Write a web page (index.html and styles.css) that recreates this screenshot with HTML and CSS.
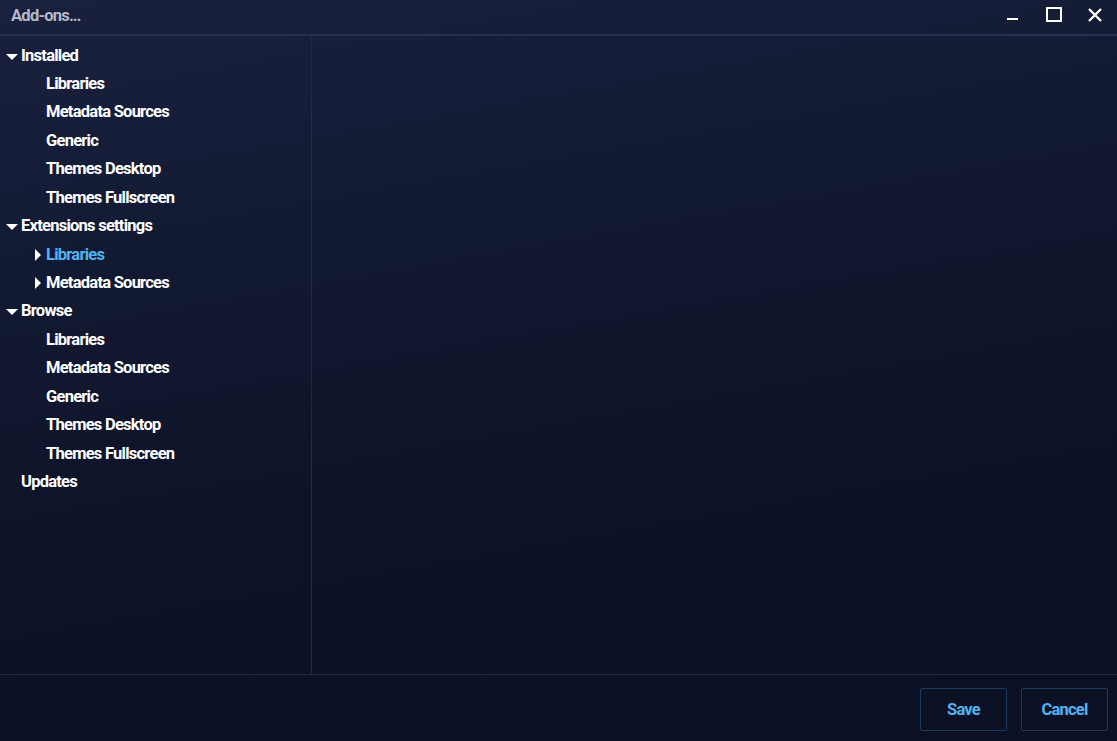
FILE: index.html
```html
<!DOCTYPE html>
<html lang="en">
<head>
  <meta charset="UTF-8">
  <title>Add-ons…</title>
  <link rel="stylesheet" href="styles.css">
</head>
<body>
  <div class="window">
    <div class="titlebar">
      <span class="title">Add-ons…</span>
      <div class="win-buttons">
        <span class="win-btn"><svg width="16" height="16" viewBox="0 0 16 16"><rect x="2" y="11" width="11" height="2" fill="#fff"/></svg></span>
        <span class="win-btn"><svg width="16" height="16" viewBox="0 0 16 16"><rect x="1" y="1" width="14" height="13" fill="none" stroke="#fff" stroke-width="2"/></svg></span>
        <span class="win-btn"><svg width="16" height="16" viewBox="0 0 16 16"><path d="M2 2L14 14M14 2L2 14" stroke="#fff" stroke-width="2.4"/></svg></span>
      </div>
    </div>

    <div class="main">
      <div class="sidebar">
        <div class="node open">Installed</div>
        <div class="leaf">Libraries</div>
        <div class="leaf">Metadata Sources</div>
        <div class="leaf">Generic</div>
        <div class="leaf">Themes Desktop</div>
        <div class="leaf">Themes Fullscreen</div>
        <div class="node open">Extensions settings</div>
        <div class="leaf closed selected">Libraries</div>
        <div class="leaf closed">Metadata Sources</div>
        <div class="node open">Browse</div>
        <div class="leaf">Libraries</div>
        <div class="leaf">Metadata Sources</div>
        <div class="leaf">Generic</div>
        <div class="leaf">Themes Desktop</div>
        <div class="leaf">Themes Fullscreen</div>
        <div class="node">Updates</div>
      </div>
      <div class="content"></div>
    </div>

    <div class="footer">
      <button class="btn">Save</button>
      <button class="btn">Cancel</button>
    </div>
  </div>
</body>
</html>
```

FILE: styles.css
```css
html, body {
  margin: 0;
  height: 100%;
}
body {
  font-family: 'Roboto', 'Liberation Sans', sans-serif;
  font-weight: bold;
  font-size: 16.5px;
  letter-spacing: -0.75px;
  color: #fff;
  background: linear-gradient(170deg, #19213f 0%, #121a33 30%, #0d1327 60%, #0b1024 100%);
}
.window {
  height: 741px;
  display: flex;
  flex-direction: column;
}
.titlebar {
  height: 34px;
  border-bottom: 2px solid #1f3352;
  display: flex;
  align-items: center;
  justify-content: space-between;
  padding-left: 11px;
}
.title {
  color: #b6bac6;
  margin-top: -4px;
}
.win-buttons {
  display: flex;
  height: 100%;
  padding-right: 2px;
}
.win-btn {
  width: 41px;
  display: flex;
  align-items: center;
  justify-content: center;
  margin-top: -4px;
}
.main {
  flex: 1;
  display: flex;
  min-height: 0;
}
.sidebar {
  width: 312px;
  border-right: 1px solid #1c2d48;
  padding-top: 5.5px;
  box-sizing: border-box;
}
.content {
  flex: 1;
}
.node, .leaf {
  height: 28.45px;
  line-height: 28.45px;
  position: relative;
  white-space: nowrap;
}
.node {
  padding-left: 21px;
}
.leaf {
  padding-left: 46px;
}
.node.open::before {
  content: '';
  position: absolute;
  left: 6px;
  top: 12px;
  border-left: 6px solid transparent;
  border-right: 6px solid transparent;
  border-top: 6px solid #fff;
}
.leaf.closed::before {
  content: '';
  position: absolute;
  left: 35px;
  top: 8px;
  border-top: 6px solid transparent;
  border-bottom: 6px solid transparent;
  border-left: 6px solid #fff;
}
.selected {
  color: #4fb4f0;
}
.footer {
  height: 66px;
  border-top: 1px solid #1c2d48;
  display: flex;
  justify-content: flex-end;
  align-items: center;
  gap: 14px;
  padding-right: 9px;
}
.btn {
  width: 87px;
  height: 43px;
  background: transparent;
  border: 1px solid #1f3a5a;
  border-radius: 2px;
  color: #4fb4f0;
  font-family: inherit;
  font-weight: bold;
  font-size: 16.5px;
  letter-spacing: inherit;
  margin-top: 2px;
}
```
